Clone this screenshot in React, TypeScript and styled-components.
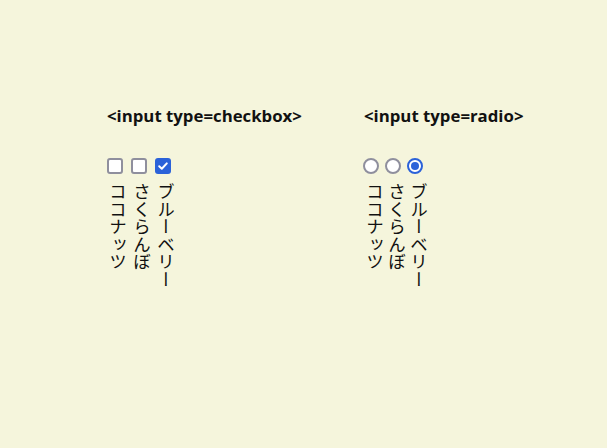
import React from "react";
import styled, { createGlobalStyle } from "styled-components";

const Global = createGlobalStyle`
  html, body { margin: 0; padding: 0; background: #f5f5dc; }
  body { font-family: "Noto Sans", "Noto Sans CJK JP", sans-serif; color: #111; }
`;

const Page = styled.div`
  display: flex;
  padding: 104px 0 0 107px;
`;

const Section = styled.section<{ $width: number }>`
  display: flex;
  flex-direction: column;
  width: ${(p) => p.$width}px;
`;

const Heading = styled.h2`
  margin: 0;
  font-family: "Open Sans", "Noto Sans", sans-serif;
  font-weight: 700;
  font-size: 16.8px;
  line-height: 24px;
  color: #111;
`;

const Options = styled.div`
  display: flex;
  margin-top: 30px;
`;

const Option = styled.label<{ $pitch: number; $textShift: number }>`
  display: flex;
  flex-direction: column;
  align-items: flex-start;
  width: ${(p) => p.$pitch}px;
  & > span:last-child {
    margin-left: ${(p) => p.$textShift}px;
  }
`;

const Box = styled.span<{ $checked: boolean }>`
  box-sizing: border-box;
  width: 16px;
  height: 16px;
  border-radius: 3px;
  border: ${(p) => (p.$checked ? "none" : "2px solid #8f8f9d")};
  background: ${(p) => (p.$checked ? "#2b62d9" : "#ffffff")};
  display: flex;
  align-items: center;
  justify-content: center;
`;

const Radio = styled.span<{ $checked: boolean }>`
  box-sizing: border-box;
  width: 16px;
  height: 16px;
  margin-left: -1px;
  border-radius: 50%;
  border: 2px solid ${(p) => (p.$checked ? "#2b62d9" : "#8f8f9d")};
  background: #ffffff;
  display: flex;
  align-items: center;
  justify-content: center;
  &::after {
    content: "";
    display: ${(p) => (p.$checked ? "block" : "none")};
    width: 8px;
    height: 8px;
    border-radius: 50%;
    background: #2b62d9;
  }
`;

const VText = styled.span`
  writing-mode: vertical-rl;
  font-family: "Noto Sans CJK JP", sans-serif;
  font-size: 17.5px;
  line-height: 17.5px;
  margin-top: 9px;
  color: #111;
`;

const Check = () => (
  <svg width="12" height="12" viewBox="0 0 12 12">
    <path d="M2.2 6.3 L4.8 8.8 L9.8 3.4" fill="none" stroke="#fff" strokeWidth="2" strokeLinecap="round" strokeLinejoin="round" />
  </svg>
);

const fruits = ["ココナッツ", "さくらんぼ", "ブルーベリー"];

export default function App() {
  return (
    <>
      <Global />
      <Page>
        <Section $width={257}>
          <Heading>&lt;input type=checkbox&gt;</Heading>
          <Options>
            {fruits.map((f, i) => (
              <Option key={f} $pitch={24} $textShift={2}>
                <Box $checked={i === 2}>{i === 2 && <Check />}</Box>
                <VText>{f}</VText>
              </Option>
            ))}
          </Options>
        </Section>
        <Section $width={200}>
          <Heading>&lt;input type=radio&gt;</Heading>
          <Options>
            {fruits.map((f, i) => (
              <Option key={f} $pitch={22} $textShift={2}>
                <Radio $checked={i === 2} />
                <VText>{f}</VText>
              </Option>
            ))}
          </Options>
        </Section>
      </Page>
    </>
  );
}
